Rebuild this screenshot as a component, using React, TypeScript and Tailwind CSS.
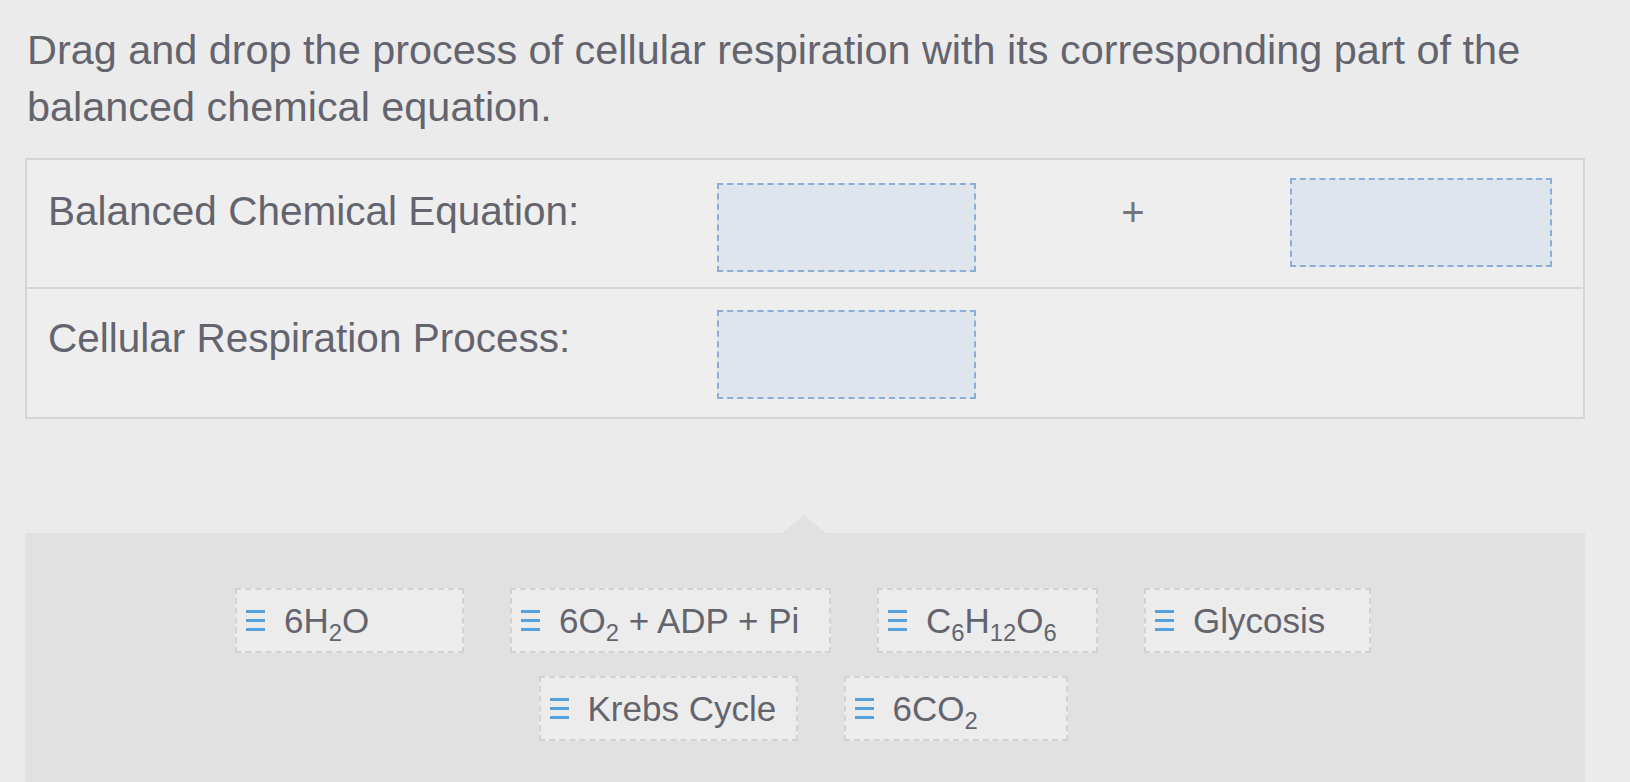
import React from 'react';

const Grip = () => (
  <svg width="19" height="21" viewBox="0 0 19 21" className="shrink-0">
    <rect x="0" y="0" width="19" height="3" fill="#56a2dc" />
    <rect x="0" y="9" width="19" height="3" fill="#56a2dc" />
    <rect x="0" y="18" width="19" height="3" fill="#56a2dc" />
  </svg>
);

const Sub = ({ children }: { children: React.ReactNode }) => (
  <sub className="text-[0.68em] -bottom-[0.32em]">{children}</sub>
);

const Chip = ({ width, children }: { width: string; children: React.ReactNode }) => (
  <div
    className={`${width} h-[65px] flex items-center gap-[19px] pl-[9px] bg-[#ececec] border-2 border-dashed border-[#d2d2d2] text-[35px] text-[#64646e] whitespace-nowrap`}
  >
    <Grip />
    <span className="leading-none">{children}</span>
  </div>
);

const DropBox = ({ className }: { className: string }) => (
  <div className={`${className} h-[89px] bg-[#dee5ed] border-2 border-dashed border-[#8cadd6] shrink-0`} />
);

const App = () => {
  return (
    <div
      className="h-[782px] overflow-hidden bg-[#ebebeb] flex flex-col text-[#64646e]"
      style={{ fontFamily: '"Liberation Sans", Arial, sans-serif' }}
    >
      <h1 className="pl-[27px] pr-[60px] pt-[22px] text-[41.4px] leading-[57px] font-normal">
        Drag and drop the process of cellular respiration with its corresponding part of the balanced chemical equation.
      </h1>

      <div className="ml-[25px] mt-[22px] w-[1560px] border-2 border-[#d5d5d5] bg-[#eeeeee]">
        <div className="flex items-start h-[129px] border-b-2 border-[#d5d5d5]">
          <div className="w-[690px] shrink-0 pl-[21px] pt-[27px] text-[40.5px] leading-[48px]">
            Balanced Chemical Equation:
          </div>
          <DropBox className="w-[259px] mt-[23px]" />
          <div className="w-[314px] shrink-0 mt-[30px] text-center text-[40px] leading-[44px] text-[#74747d]">
            +
          </div>
          <DropBox className="w-[262px] mt-[18px]" />
        </div>
        <div className="flex items-start h-[128px]">
          <div className="w-[690px] shrink-0 pl-[21px] pt-[25px] text-[40.5px] leading-[48px]">
            Cellular Respiration Process:
          </div>
          <DropBox className="w-[259px] mt-[21px]" />
        </div>
      </div>

      <div className="relative ml-[25px] mt-[114px] w-[1560px] flex-1 bg-[#e1e1e1] pl-[178px] pr-[182px] pt-[55px]">
        <div className="absolute left-[757px] -top-[18px] w-0 h-0 border-l-[22px] border-r-[22px] border-b-[18px] border-l-transparent border-r-transparent border-b-[#e1e1e1]" />
        <div className="flex flex-wrap justify-center gap-x-[46px] gap-y-[23px]">
          <Chip width="w-[229px]">
            6H<Sub>2</Sub>O
          </Chip>
          <Chip width="w-[321px]">
            6O<Sub>2</Sub> + ADP + Pi
          </Chip>
          <Chip width="w-[221px]">
            C<Sub>6</Sub>H<Sub>12</Sub>O<Sub>6</Sub>
          </Chip>
          <Chip width="w-[227px]">Glycosis</Chip>
          <Chip width="w-[259px]">Krebs Cycle</Chip>
          <Chip width="w-[224px]">
            6CO<Sub>2</Sub>
          </Chip>
        </div>
      </div>
    </div>
  );
};

export default App;
